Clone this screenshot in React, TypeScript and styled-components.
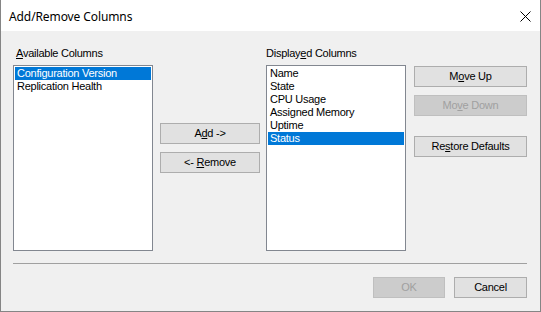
import React from 'react'
import styled, { createGlobalStyle } from 'styled-components'

const GlobalStyle = createGlobalStyle`
  html, body {
    margin: 0;
    padding: 0;
    background: #ffffff;
  }
  body {
    font-family: 'Liberation Sans', Arial, sans-serif;
  }
`

const Window = styled.div`
  width: 541px;
  height: 312px;
  box-sizing: border-box;
  border: 1px solid #858585;
  border-top: none;
  background: #f0f0f0;
  display: flex;
  flex-direction: column;
`

const TitleBar = styled.div`
  height: 31px;
  flex: none;
  background: #ffffff;
  display: flex;
  align-items: center;
  justify-content: space-between;
  padding: 1px 9px 0 8px;
  box-sizing: border-box;
`

const Title = styled.span`
  font-family: 'Noto Sans', 'Open Sans', sans-serif;
  font-size: 12px;
  letter-spacing: -0.1px;
  color: #000000;
`

const CloseIcon = styled.svg`
  display: block;
  width: 11px;
  height: 11px;
`

const Body = styled.div`
  flex: 1;
  padding: 15px 13px 0 12px;
  display: flex;
  flex-direction: column;
`

const Main = styled.div`
  display: flex;
  align-items: flex-start;
`

const ListColumn = styled.div<{ $offset?: number }>`
  width: 140px;
  margin-left: ${p => p.$offset || 0}px;
  display: flex;
  flex-direction: column;
`

const Label = styled.div<{ $indent?: number }>`
  font-size: 11px;
  letter-spacing: -0.25px;
  line-height: 13px;
  height: 13px;
  color: #000000;
  padding-left: ${p => p.$indent || 0}px;
  margin: 1px 0 5px;
  white-space: nowrap;
`

const ListBox = styled.div`
  height: 186px;
  box-sizing: border-box;
  border: 1px solid #828790;
  background: #ffffff;
  padding: 1px;
`

const Item = styled.div<{ $selected?: boolean }>`
  height: 13px;
  line-height: 13px;
  font-size: 11px;
  letter-spacing: -0.25px;
  padding-left: 2px;
  white-space: nowrap;
  color: ${p => (p.$selected ? '#ffffff' : '#000000')};
  background: ${p => (p.$selected ? '#0078d7' : 'transparent')};
`

const ButtonColumn = styled.div<{ $offset: number; $top: number; $width: number }>`
  width: ${p => p.$width}px;
  margin-left: ${p => p.$offset}px;
  padding-top: ${p => p.$top}px;
  display: flex;
  flex-direction: column;
`

const Button = styled.button<{ $width?: number; $gap?: number }>`
  height: 21px;
  width: ${p => (p.$width ? `${p.$width}px` : '100%')};
  margin-top: ${p => p.$gap || 0}px;
  box-sizing: border-box;
  padding: 0;
  border: 1px solid #adadad;
  background: #e1e1e1;
  color: #000000;
  font-family: 'Liberation Sans', Arial, sans-serif;
  font-size: 11px;
  letter-spacing: -0.25px;
  line-height: 19px;
  text-align: center;
  white-space: nowrap;

  &:disabled {
    border-color: #bfbfbf;
    background: #cccccc;
    color: #a0a0a0;
  }
`

const Separator = styled.div`
  height: 1px;
  margin-top: 12px;
  background: #a0a0a0;
`

const Footer = styled.div`
  display: flex;
  justify-content: flex-end;
  gap: 9px;
  margin-top: 13px;
`

const available = ['Configuration Version', 'Replication Health']
const displayed = ['Name', 'State', 'CPU Usage', 'Assigned Memory', 'Uptime', 'Status']

export default function App() {
  return (
    <>
      <GlobalStyle />
      <Window>
        <TitleBar>
          <Title>Add/Remove Columns</Title>
          <CloseIcon viewBox="0 0 11 11">
            <path d="M0.5 0.5 L10.5 10.5 M10.5 0.5 L0.5 10.5" stroke="#000" strokeWidth="1" fill="none" />
          </CloseIcon>
        </TitleBar>
        <Body>
          <Main>
            <ListColumn>
              <Label $indent={3}>
                <u>A</u>vailable Columns
              </Label>
              <ListBox>
                {available.map((name, i) => (
                  <Item key={name} $selected={i === 0}>
                    {name}
                  </Item>
                ))}
              </ListBox>
            </ListColumn>

            <ButtonColumn $offset={7} $top={77} $width={100}>
              <Button>
                A<u>d</u>d -&gt;
              </Button>
              <Button $gap={8}>
                &lt;- <u>R</u>emove
              </Button>
            </ButtonColumn>

            <ListColumn $offset={6}>
              <Label>
                Display<u>e</u>d Columns
              </Label>
              <ListBox>
                {displayed.map(name => (
                  <Item key={name} $selected={name === 'Status'}>
                    {name}
                  </Item>
                ))}
              </ListBox>
            </ListColumn>

            <ButtonColumn $offset={8} $top={20} $width={113}>
              <Button>
                M<u>o</u>ve Up
              </Button>
              <Button $gap={8} disabled>
                Mo<u>v</u>e Down
              </Button>
              <Button $gap={20}>
                Re<u>s</u>tore Defaults
              </Button>
            </ButtonColumn>
          </Main>

          <Separator />

          <Footer>
            <Button $width={72} disabled>
              OK
            </Button>
            <Button $width={73}>Cancel</Button>
          </Footer>
        </Body>
      </Window>
    </>
  )
}
